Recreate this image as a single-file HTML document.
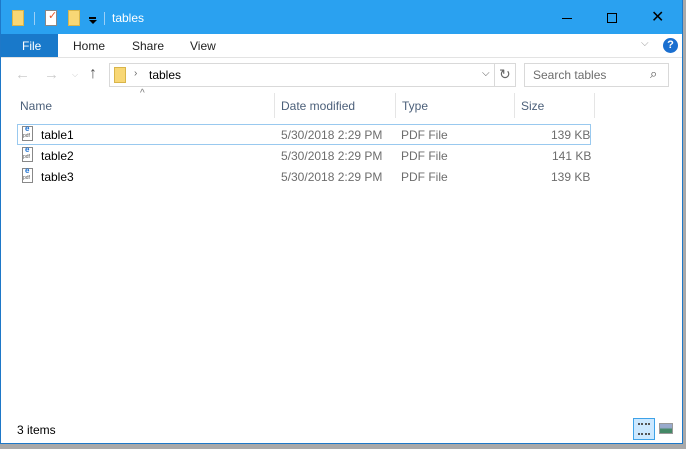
<!DOCTYPE html>
<html><head><style>
*{margin:0;padding:0;box-sizing:border-box}
body{width:686px;height:449px;background:#a9a9a9;font-family:"Liberation Sans",sans-serif;font-size:12px;color:#000;position:relative;overflow:hidden}
.win{position:absolute;left:0;top:0;width:683px;height:444px;background:#fff}
.frame{position:absolute;left:0;top:0;width:683px;height:444px;border:1px solid #1e78c8;border-top:none;pointer-events:none}
.title{position:absolute;left:0;top:0;width:683px;height:34px;background:#2aa1f0}
.ab{position:absolute}
.fold{position:absolute;width:12px;height:16px;background:#f8d775;border:1px solid #d9b54a}
.tabs{position:absolute;left:0;top:34px;width:682px;height:24px;background:#fff;border-bottom:1px solid #e3e3e3}
.tab{position:absolute;top:5px;font-size:12px;color:#222}
.t{position:absolute;white-space:nowrap}
.hdr{color:#4c607a}
.g{color:#6d6d6d}
.pdf{position:absolute;width:11px;height:15px;border:1px solid #888;background:#fff}
.pdf:before{content:"e";position:absolute;left:2px;top:-3px;font-size:8px;color:#1a6fd0;font-weight:bold}
.pdf:after{content:"pdf";position:absolute;left:0;top:6px;font-size:5px;color:#555}
</style></head><body>
<div class="win">
<div class="title">
 <div class="fold" style="left:12px;top:10px"></div>
 <div class="ab" style="left:34px;top:12px;width:1px;height:13px;background:#9bd0f7"></div>
 <div class="ab" style="left:45px;top:10px;width:12px;height:16px;background:#fff;border:1px solid #888"></div>
 <div class="t" style="left:48px;top:9px;color:#e8552a;font-size:11px">✓</div>
 <div class="fold" style="left:68px;top:10px"></div>
 <div class="ab" style="left:89px;top:17px;width:7px;height:2px;background:#000"></div>
 <div class="ab" style="left:89px;top:20px;border-left:4px solid transparent;border-right:4px solid transparent;border-top:4px solid #000"></div>
 <div class="ab" style="left:104px;top:12px;width:1px;height:13px;background:#9bd0f7"></div>
 <div class="t" style="left:112px;top:11px;color:#fff;font-size:12px">tables</div>
 <div class="ab" style="left:562px;top:18px;width:10px;height:1px;background:#000"></div>
 <div class="ab" style="left:607px;top:13px;width:10px;height:10px;border:1px solid #000"></div>
 <div class="t" style="left:651px;top:7px;font-size:16px;color:#000">✕</div>
</div>
<div class="tabs">
 <div class="ab" style="left:0;top:0;width:58px;height:23px;background:#1979ca"></div>
 <div class="tab" style="left:22px;color:#fff">File</div>
 <div class="tab" style="left:73px">Home</div>
 <div class="tab" style="left:132px">Share</div>
 <div class="tab" style="left:190px">View</div>
 <div class="t" style="left:641px;top:4px;color:#999;font-size:10px">⌵</div>
 <div class="ab" style="left:663px;top:4px;width:15px;height:15px;border-radius:50%;background:#1a6fd0;color:#fff;font-size:11px;font-weight:bold;text-align:center;line-height:15px">?</div>
</div>
<div class="t" style="left:15px;top:66px;color:#ccc;font-size:15px">←</div>
<div class="t" style="left:44px;top:66px;color:#ccc;font-size:15px">→</div>
<div class="t" style="left:72px;top:70px;color:#ccc;font-size:8px">⌵</div>
<div class="t" style="left:89px;top:65px;color:#555;font-size:16px;font-weight:bold">↑</div>
<div class="ab" style="left:109px;top:63px;width:386px;height:24px;border:1px solid #d9d9d9"></div>
<div class="ab" style="left:494px;top:63px;width:22px;height:24px;border:1px solid #d9d9d9"></div>
<div class="fold" style="left:114px;top:67px"></div>
<div class="t" style="left:134px;top:68px;color:#666;font-size:10px">›</div>
<div class="t" style="left:149px;top:68px">tables</div>
<div class="t" style="left:482px;top:68px;color:#555;font-size:10px">⌵</div>
<div class="t" style="left:499px;top:66px;color:#666;font-size:14px">↻</div>
<div class="ab" style="left:524px;top:63px;width:145px;height:24px;border:1px solid #d9d9d9"></div>
<div class="t g" style="left:533px;top:68px">Search tables</div>
<div class="t" style="left:650px;top:66px;color:#555;font-size:13px">⌕</div>
<div class="t" style="left:140px;top:88px;color:#777;font-size:10px">^</div>
<div class="t hdr" style="left:20px;top:99px">Name</div>
<div class="ab" style="left:274px;top:93px;width:1px;height:25px;background:#e5e5e5"></div>
<div class="t hdr" style="left:281px;top:99px">Date modified</div>
<div class="ab" style="left:395px;top:93px;width:1px;height:25px;background:#e5e5e5"></div>
<div class="t hdr" style="left:402px;top:99px">Type</div>
<div class="ab" style="left:514px;top:93px;width:1px;height:25px;background:#e5e5e5"></div>
<div class="t hdr" style="left:521px;top:99px">Size</div>
<div class="ab" style="left:594px;top:93px;width:1px;height:25px;background:#e5e5e5"></div>
<div class="ab" style="left:17px;top:124px;width:574px;height:21px;border:1px solid #99c9ef"></div>
<div class="pdf" style="left:22px;top:126px"></div>
<div class="t" style="left:41px;top:128px">table1</div>
<div class="t g" style="left:281px;top:128px">5/30/2018 2:29 PM</div>
<div class="t g" style="left:401px;top:128px">PDF File</div>
<div class="t g" style="left:551px;top:128px">139 KB</div>
<div class="pdf" style="left:22px;top:147px"></div>
<div class="t" style="left:41px;top:149px">table2</div>
<div class="t g" style="left:281px;top:149px">5/30/2018 2:29 PM</div>
<div class="t g" style="left:401px;top:149px">PDF File</div>
<div class="t g" style="left:552px;top:149px">141 KB</div>
<div class="pdf" style="left:22px;top:168px"></div>
<div class="t" style="left:41px;top:170px">table3</div>
<div class="t g" style="left:281px;top:170px">5/30/2018 2:29 PM</div>
<div class="t g" style="left:401px;top:170px">PDF File</div>
<div class="t g" style="left:551px;top:170px">139 KB</div>
<div class="t" style="left:17px;top:423px">3 items</div>
<div class="ab" style="left:633px;top:418px;width:22px;height:22px;background:#cce8ff;border:1px solid #3ea2e8"></div>
<div class="ab" style="left:638px;top:423px;width:12px;height:12px;border-top:2px dotted #555;border-bottom:2px dotted #555"></div>
<div class="ab" style="left:659px;top:423px;width:14px;height:11px;border:1px solid #999;background:linear-gradient(#9ac 40%,#486 60%)"></div>
</div>
<div class="frame"></div>
</body></html>
